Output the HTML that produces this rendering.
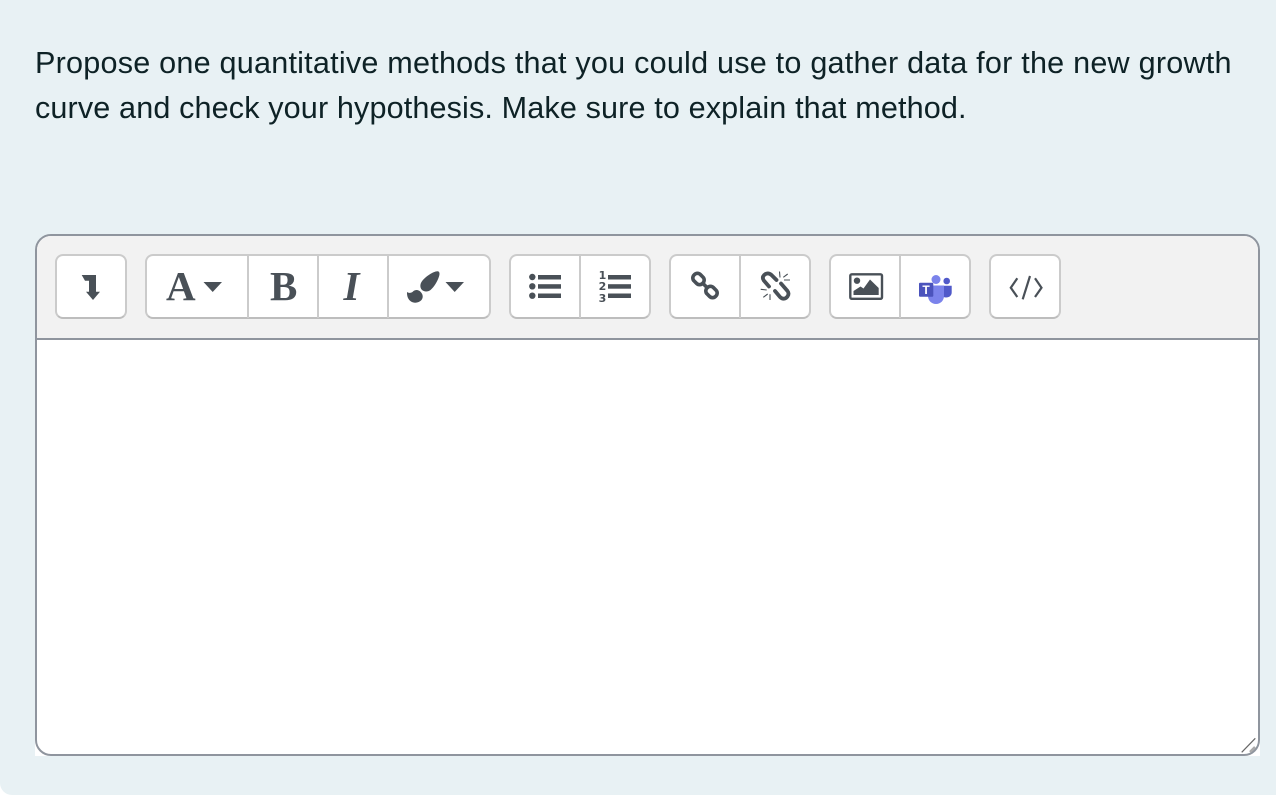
<!DOCTYPE html>
<html>
<head>
<meta charset="utf-8">
<style>
html,body{margin:0;padding:0;background:#fff;width:1276px;height:800px;overflow:hidden}
#bg{position:absolute;left:0;top:0;width:1276px;height:795px;background:#e8f1f4;border-bottom-left-radius:12px}
#whitecorner{position:absolute;left:35px;top:600px;width:1225px;height:156px;background:#fff}
#ed{position:absolute;left:35px;top:234px;width:1221px;height:518px;background:#fff;border:2px solid #8f959e;border-radius:16px;overflow:hidden}
#tb{position:absolute;left:0;top:0;width:100%;height:102px;background:#f2f2f2;border-bottom:2px solid #8f959e}
.g{position:absolute;top:254px;height:61px;background:#fff;border:2px solid #cbcbcb;border-bottom-color:#bdbdbd;border-radius:8px}
.d{position:absolute;top:255px;width:2px;height:63px;background:#cbcbcb}
svg{position:absolute;left:0;top:0}
</style>
</head>
<body>
<div id="bg"></div>
<div id="whitecorner"></div>
<div id="ed"><div id="tb"></div></div>

<div class="g" style="left:55px;width:68px"></div>
<div class="g" style="left:145px;width:342px"></div>
<div class="g" style="left:509px;width:138px"></div>
<div class="g" style="left:669px;width:138px"></div>
<div class="g" style="left:829px;width:138px"></div>
<div class="g" style="left:989px;width:68px"></div>
<div class="d" style="left:247px"></div>
<div class="d" style="left:317px"></div>
<div class="d" style="left:387px"></div>
<div class="d" style="left:579px"></div>
<div class="d" style="left:739px"></div>
<div class="d" style="left:899px"></div>

<svg width="1276" height="800" viewBox="0 0 1276 800" xmlns="http://www.w3.org/2000/svg">
  <g font-family="'Liberation Sans',Arial,sans-serif" font-size="30.6" fill="#0e2226">
    <text x="35" y="73" textLength="1196.500" lengthAdjust="spacing">Propose one quantitative methods that you could use to gather data for the new growth</text>
    <text x="35" y="118" textLength="931.500" lengthAdjust="spacing">curve and check your hypothesis. Make sure to explain that method.</text>
  </g>

  <g fill="#495057">
    <!-- turn-down arrow -->
    <path d="M81.700 275H96V291.700H100L93 300L86 291.700H89V280.700H85Z"/>
    <!-- A B I -->
    <g font-family="'Liberation Serif',serif" font-weight="700" font-size="41">
      <text x="166" y="300">A</text>
      <text x="270" y="300">B</text>
      <text x="343.500" y="300" font-style="italic">I</text>
    </g>
    <path d="M203.500 282H222L212.700 292Z"/>
    <path d="M445.500 282H464L454.700 292Z"/>
    <!-- brush -->
    <path d="M437.500 271.300C439.500 271.300 440 273.500 439 276.500C437.500 281.500 434 287 430.500 290C428 292 424 292 421.800 289.800C419.800 287.500 420 284 421.800 281.500C425 277 433 271.500 437.500 271.300Z"/>
    <path d="M407 292C409 293.500 411.500 293 413 291.500C415.500 289.300 418.500 289.800 420.500 291.800C423 294.300 423.500 297.500 421.500 300C419 303 414 303.500 411 301.500C408 299.500 406.800 296 407 292Z"/>
    <!-- bullets -->
    <circle cx="532.300" cy="277" r="3.200"/>
    <circle cx="532.300" cy="286.300" r="3.200"/>
    <circle cx="532.300" cy="295.700" r="3.200"/>
    <rect x="538" y="275" width="23" height="4.500"/>
    <rect x="538" y="284.200" width="23" height="4.500"/>
    <rect x="538" y="293.500" width="23" height="4.500"/>
    <!-- numbers -->
    <g font-family="'DejaVu Sans',sans-serif" font-weight="700" font-size="11" text-anchor="middle">
      <text x="602.500" y="279.200">1</text>
      <text x="602.500" y="290.200">2</text>
      <text x="602.500" y="302">3</text>
    </g>
    <rect x="608" y="275" width="23" height="4.500"/>
    <rect x="608" y="284.200" width="23" height="4.500"/>
    <rect x="608" y="293.500" width="23" height="4.500"/>
  </g>

  <!-- link -->
  <g fill="none" stroke="#495057" stroke-width="3.600">
    <rect x="-6" y="-4.500" width="12" height="9" rx="4.200" transform="translate(698.500 279) rotate(45)"/>
    <rect x="-6" y="-4.500" width="12" height="9" rx="4.200" transform="translate(711.500 292) rotate(45)"/>
    <path d="M702.500 283L707.500 288"/>
  </g>

  <!-- unlink -->
  <g fill="none" stroke="#495057" stroke-width="3.800" stroke-linecap="round">
    <path d="M769 286.500L763.800 280.500Q761.800 277.500 764 275.200L765.500 274Q768.500 272.500 771.500 275L776.500 280"/>
    <path d="M775 291L780 297Q783 299.800 786 298L787.500 296.500Q789.500 293.500 787.500 291L781 283.500"/>
  </g>
  <g fill="none" stroke="#495057" stroke-width="1.100">
    <path d="M779.500 271.500L780 277.500M787.700 274L783.300 277.300M790 280H784"/>
    <path d="M760.700 289.300L766.700 290M763.300 297.300L767.700 294M770 300V294.300"/>
  </g>

  <!-- image -->
  <rect x="850.300" y="274.300" width="31.700" height="24.500" rx="1.500" fill="none" stroke="#495057" stroke-width="2.400"/>
  <circle cx="857" cy="280.700" r="3.200" fill="#495057"/>
  <path d="M853.500 295V291L860.500 286.500L863.500 288.500L870 279.500L878.700 288V295Z" fill="#495057"/>

  <!-- teams -->
  <circle cx="946.700" cy="281" r="3.300" fill="#5059c9"/>
  <path d="M940.500 285.700H951.700V292.500C951.700 295.500 949.300 297.500 946 297.500C943 297.500 940.500 295.500 940.500 292.500Z" fill="#5059c9"/>
  <circle cx="936" cy="279.500" r="4.500" fill="#7b83eb"/>
  <path d="M928 285.500H944V296C944 300.500 940.500 304 936 304C931.500 304 928 300.500 928 296Z" fill="#7b83eb"/>
  <rect x="919" y="282.700" width="14.300" height="14" rx="1" fill="#4b53bc"/>
  <text x="926.100" y="294" font-family="'Liberation Sans',sans-serif" font-weight="700" font-size="12" fill="#fff" text-anchor="middle">T</text>

  <!-- code -->
  <g fill="none" stroke="#495057" stroke-width="2.200">
    <path d="M1017.300 278.300L1010.800 287.700L1017.300 297"/>
    <path d="M1035 278.300L1041.500 287.700L1035 297"/>
    <path d="M1030 276L1022.700 299.300"/>
  </g>

  <!-- resize handle -->
  <path d="M1241.700 752.300L1255.300 738.300" stroke="#666" stroke-width="1.200" fill="none"/>
  <path d="M1250 752L1255 747" stroke="#aaa" stroke-width="2.500" fill="none"/>
</svg>
</body>
</html>
